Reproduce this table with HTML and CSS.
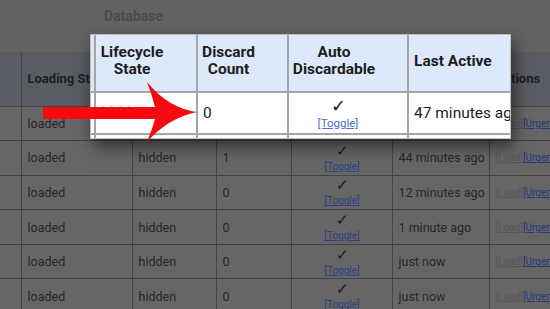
FILE: index.html
```html
<!DOCTYPE html>
<html lang="en">
<head>
  <meta charset="UTF-8">
  <title>Discards</title>
  <link rel="stylesheet" href="styles.css">
</head>
<body>

  <!-- Tab label -->
  <div class="tabs">
    <span class="tab">Database</span>
  </div>

  <!-- Tab table -->
  <table class="tab-table">
    <colgroup>
      <col class="c-edge">
      <col class="c-loading">
      <col class="c-life">
      <col class="c-count">
      <col class="c-auto">
      <col class="c-active">
      <col class="c-actions">
    </colgroup>
    <thead>
      <tr>
        <th></th>
        <th>Loading State</th>
        <th>Lifecycle State</th>
        <th>Discard Count</th>
        <th>Auto Discardable</th>
        <th>Last Active</th>
        <th>Actions</th>
      </tr>
    </thead>
    <tbody>
      <tr>
        <td></td><td>loaded</td><td>hidden</td><td>0</td>
        <td class="auto"><span class="check">✓</span><a href="#">[Toggle]</a></td>
        <td>47 minutes ago</td>
        <td class="actions"><span class="off">[Load]</span><a href="#">[Urgent Discard]</a></td>
      </tr>
      <tr>
        <td></td><td>loaded</td><td>hidden</td><td>1</td>
        <td class="auto"><span class="check">✓</span><a href="#">[Toggle]</a></td>
        <td>44 minutes ago</td>
        <td class="actions"><span class="off">[Load]</span><a href="#">[Urgent Discard]</a></td>
      </tr>
      <tr>
        <td></td><td>loaded</td><td>hidden</td><td>0</td>
        <td class="auto"><span class="check">✓</span><a href="#">[Toggle]</a></td>
        <td>12 minutes ago</td>
        <td class="actions"><span class="off">[Load]</span><a href="#">[Urgent Discard]</a></td>
      </tr>
      <tr>
        <td></td><td>loaded</td><td>hidden</td><td>0</td>
        <td class="auto"><span class="check">✓</span><a href="#">[Toggle]</a></td>
        <td>1 minute ago</td>
        <td class="actions"><span class="off">[Load]</span><a href="#">[Urgent Discard]</a></td>
      </tr>
      <tr>
        <td></td><td>loaded</td><td>hidden</td><td>0</td>
        <td class="auto"><span class="check">✓</span><a href="#">[Toggle]</a></td>
        <td>just now</td>
        <td class="actions"><span class="off">[Load]</span><a href="#">[Urgent Discard]</a></td>
      </tr>
      <tr>
        <td></td><td>loaded</td><td>hidden</td><td>0</td>
        <td class="auto"><span class="check">✓</span><a href="#">[Toggle]</a></td>
        <td>just now</td>
        <td class="actions"><span class="off">[Load]</span><a href="#">[Urgent Discard]</a></td>
      </tr>
    </tbody>
  </table>

  <!-- Magnified close-up of the first row -->
  <div class="zoom-box">
    <table class="zoom-table">
      <colgroup>
        <col class="z-edge">
        <col class="z-life">
        <col class="z-count">
        <col class="z-auto">
        <col class="z-active">
      </colgroup>
      <thead>
        <tr>
          <th></th>
          <th>Lifecycle<br>State</th>
          <th>Discard<br>Count</th>
          <th>Auto<br>Discardable</th>
          <th class="wide">Last Active</th>
        </tr>
      </thead>
      <tbody>
        <tr>
          <td></td>
          <td class="faint">hidden</td>
          <td>0</td>
          <td class="auto"><span class="check">✓</span><a href="#">[Toggle]</a></td>
          <td>47 minutes ago</td>
        </tr>
        <tr class="next">
          <td></td><td></td><td></td><td></td><td></td>
        </tr>
      </tbody>
    </table>
  </div>

  <!-- Pointer arrow -->
  <svg class="arrow" width="550" height="309" viewBox="0 0 550 309">
    <path d="M43,107 L155,107 Q152,95 147,82 Q168,108 197,112 Q168,118 147,142 Q152,130 155,119 L43,119 Z" fill="#f40a0f"/>
  </svg>

</body>
</html>
```

FILE: styles.css
```css
* {
  margin: 0;
  padding: 0;
  box-sizing: border-box;
}

body {
  font-family: Roboto, 'Noto Sans', sans-serif;
  background: #636363;
  color: #262626;
  width: 550px;
  height: 309px;
  overflow: hidden;
  position: relative;
}

/* Tab label */
.tabs {
  height: 52px;
  padding: 6px 0 0 104px;
}

.tab {
  font-size: 14px;
  font-weight: bold;
  color: #4b4b4b;
}

/* Background table */
.tab-table {
  border-collapse: collapse;
  table-layout: fixed;
  width: 609px;
  font-size: 12.5px;
  background: #666;
}

.c-edge { width: 21px; }
.c-loading { width: 111px; }
.c-life { width: 84px; }
.c-count { width: 75px; }
.c-auto { width: 101px; }
.c-active { width: 97px; }
.c-actions { width: 120px; }

.tab-table th,
.tab-table td {
  border: 1px solid #454545;
  border-top: none;
  padding: 0 5px 0 6px;
  text-align: left;
  white-space: nowrap;
  overflow: hidden;
}

.tab-table th {
  height: 54px;
  background: #595c62;
  font-weight: bold;
  font-size: 13px;
  color: #202020;
}

.tab-table td {
  height: 34.6px;
}

.tab-table th:first-child,
.tab-table td:first-child {
  border-left: none;
}

.tab-table .auto {
  text-align: center;
  line-height: 13px;
  padding-top: 0;
}

.check {
  display: block;
  font-size: 15px;
  line-height: 16px;
  color: #161616;
}

.tab-table .auto a {
  font-size: 10px;
  color: #2b3f82;
}

.actions {
  font-size: 10px;
}

.actions .off {
  color: #565656;
  text-decoration: underline;
}

.actions a {
  color: #24397a;
}

/* Magnified close-up */
.zoom-box {
  position: absolute;
  left: 90px;
  top: 34px;
  width: 421px;
  height: 105px;
  overflow: hidden;
  background: #fff;
  border: 1px solid #bdbdbd;
  box-shadow: 3px 7px 16px rgba(0, 0, 0, 0.55);
}

.zoom-table {
  border-collapse: collapse;
  table-layout: fixed;
  width: 431px;
}

.z-edge { width: 4px; }
.z-life { width: 102px; }
.z-count { width: 91px; }
.z-auto { width: 120px; }
.z-active { width: 114px; }

.zoom-table th,
.zoom-table td {
  border: 2px solid #a5a5a5;
  border-top: none;
  white-space: nowrap;
  overflow: hidden;
}

.zoom-table th:first-child,
.zoom-table td:first-child {
  border-left: none;
}

.zoom-table th {
  height: 57px;
  background: #dde8fb;
  font-size: 15.5px;
  line-height: 17px;
  font-weight: bold;
  color: #1d1d1d;
  text-align: center;
  padding: 0 30px 4px 2px;
}

.zoom-table th.wide {
  text-align: left;
  padding-left: 5px;
}

.zoom-table td {
  height: 42px;
  font-size: 15.5px;
  color: #222;
  padding: 0 5px;
}

.zoom-table .faint {
  color: #c4c4c4;
  padding-bottom: 3px;
}

.zoom-table .auto {
  text-align: center;
  padding: 0 26px 0 6px;
  line-height: 14px;
}

.zoom-table .check {
  font-size: 18px;
  line-height: 19px;
  color: #1a1a1a;
}

.zoom-table .auto a {
  font-size: 11.5px;
  color: #4a6bd6;
}

.zoom-table .next td {
  height: 10px;
}

/* Pointer arrow */
.arrow {
  position: absolute;
  left: 0;
  top: 0;
}
```
